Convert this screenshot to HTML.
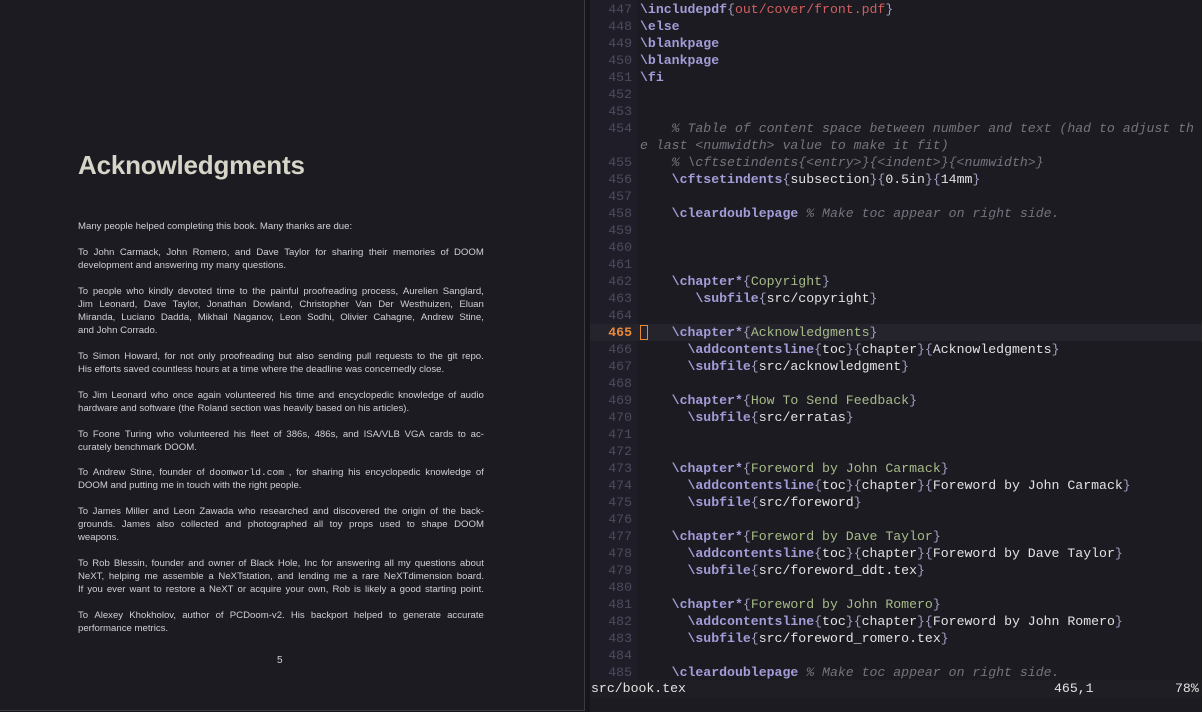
<!DOCTYPE html>
<html><head><meta charset="utf-8"><style>
*{margin:0;padding:0;box-sizing:border-box}
body{width:1202px;height:712px;background:#16151b;overflow:hidden;position:relative;font-family:"Liberation Sans",sans-serif}
#left{position:absolute;left:0;top:0;width:585px;height:711px;background:#1c1b22;border-right:1px solid #3a3a42;border-bottom:1px solid #3a3a42}
h1{position:absolute;left:78px;top:150px;font-size:26px;font-weight:bold;color:#d6d5c8;letter-spacing:-0.2px}
.p{position:absolute;left:78px;width:406px;font-size:9.6px;line-height:13px;color:#cfcfd4}
.p div{white-space:nowrap;display:flex;justify-content:space-between}
.p div.l{display:block}
#pn{position:absolute;left:277px;top:655px;font-size:10px;color:#cfcfd4}
#right{position:absolute;left:590px;top:0;width:612px;height:712px;background:#1c1b22}
#gut{position:absolute;left:0;top:0;width:48px;height:680px;background:#1f1e28}
#code{position:absolute;left:0;top:1px;width:612px;font-family:"Liberation Mono",monospace;font-size:13.2px;line-height:17px;color:#e2e2e2}
.r{height:17px;white-space:pre;position:relative}
.n{display:inline-block;width:42px;text-align:right;color:#4c4b5e}
.r .tx{position:absolute;left:50px;top:0}
.k{color:#a29cd8;font-weight:bold}
.b{color:#a09fc0}
.g{color:#a6bb88}
.c{color:#75747e;font-style:italic}
.rd{color:#d05f5f}
.cur{background:#25242d}
.cur .n{color:#e8893a;font-weight:bold}
#st{position:absolute;left:0;top:680px;width:612px;height:18px;background:#1f1e25;font-family:"Liberation Mono",monospace;font-size:13.2px;line-height:18px;color:#e2e2e2;white-space:pre}
</style></head><body>
<div id="left">
<h1>Acknowledgments</h1>
<div class="p" style="top:220px"><div class="l">Many people helped completing this book. Many thanks are due:</div></div>
<div class="p" style="top:246px"><div><span>To</span><span>John</span><span>Carmack,</span><span>John</span><span>Romero,</span><span>and</span><span>Dave</span><span>Taylor</span><span>for</span><span>sharing</span><span>their</span><span>memories</span><span>of</span><span>DOOM</span></div><div class="l">development and answering my many questions.</div></div>
<div class="p" style="top:285px"><div><span>To</span><span>people</span><span>who</span><span>kindly</span><span>devoted</span><span>time</span><span>to</span><span>the</span><span>painful</span><span>proofreading</span><span>process,</span><span>Aurelien</span><span>Sanglard,</span></div><div><span>Jim</span><span>Leonard,</span><span>Dave</span><span>Taylor,</span><span>Jonathan</span><span>Dowland,</span><span>Christopher</span><span>Van</span><span>Der</span><span>Westhuizen,</span><span>Eluan</span></div><div><span>Miranda,</span><span>Luciano</span><span>Dadda,</span><span>Mikhail</span><span>Naganov,</span><span>Leon</span><span>Sodhi,</span><span>Olivier</span><span>Cahagne,</span><span>Andrew</span><span>Stine,</span></div><div class="l">and John Corrado.</div></div>
<div class="p" style="top:350px"><div><span>To</span><span>Simon</span><span>Howard,</span><span>for</span><span>not</span><span>only</span><span>proofreading</span><span>but</span><span>also</span><span>sending</span><span>pull</span><span>requests</span><span>to</span><span>the</span><span>git</span><span>repo.</span></div><div class="l">His efforts saved countless hours at a time where the deadline was concernedly close.</div></div>
<div class="p" style="top:389px"><div><span>To</span><span>Jim</span><span>Leonard</span><span>who</span><span>once</span><span>again</span><span>volunteered</span><span>his</span><span>time</span><span>and</span><span>encyclopedic</span><span>knowledge</span><span>of</span><span>audio</span></div><div class="l">hardware and software (the Roland section was heavily based on his articles).</div></div>
<div class="p" style="top:428px"><div><span>To</span><span>Foone</span><span>Turing</span><span>who</span><span>volunteered</span><span>his</span><span>fleet</span><span>of</span><span>386s,</span><span>486s,</span><span>and</span><span>ISA/VLB</span><span>VGA</span><span>cards</span><span>to</span><span>ac-</span></div><div class="l">curately benchmark DOOM.</div></div>
<div class="p" style="top:466px"><div><span>To</span><span>Andrew</span><span>Stine,</span><span>founder</span><span>of</span><span style="font-family:'Liberation Mono',monospace">doomworld.com</span><span>,</span><span>for</span><span>sharing</span><span>his</span><span>encyclopedic</span><span>knowledge</span><span>of</span></div><div class="l">DOOM and putting me in touch with the right people.</div></div>
<div class="p" style="top:505px"><div><span>To</span><span>James</span><span>Miller</span><span>and</span><span>Leon</span><span>Zawada</span><span>who</span><span>researched</span><span>and</span><span>discovered</span><span>the</span><span>origin</span><span>of</span><span>the</span><span>back-</span></div><div><span>grounds.</span><span>James</span><span>also</span><span>collected</span><span>and</span><span>photographed</span><span>all</span><span>toy</span><span>props</span><span>used</span><span>to</span><span>shape</span><span>DOOM</span></div><div class="l">weapons.</div></div>
<div class="p" style="top:557px"><div><span>To</span><span>Rob</span><span>Blessin,</span><span>founder</span><span>and</span><span>owner</span><span>of</span><span>Black</span><span>Hole,</span><span>Inc</span><span>for</span><span>answering</span><span>all</span><span>my</span><span>questions</span><span>about</span></div><div><span>NeXT,</span><span>helping</span><span>me</span><span>assemble</span><span>a</span><span>NeXTstation,</span><span>and</span><span>lending</span><span>me</span><span>a</span><span>rare</span><span>NeXTdimension</span><span>board.</span></div><div><span>If</span><span>you</span><span>ever</span><span>want</span><span>to</span><span>restore</span><span>a</span><span>NeXT</span><span>or</span><span>acquire</span><span>your</span><span>own,</span><span>Rob</span><span>is</span><span>likely</span><span>a</span><span>good</span><span>starting</span><span>point.</span></div></div>
<div class="p" style="top:609px"><div><span>To</span><span>Alexey</span><span>Khokholov,</span><span>author</span><span>of</span><span>PCDoom-v2.</span><span>His</span><span>backport</span><span>helped</span><span>to</span><span>generate</span><span>accurate</span></div><div class="l">performance metrics.</div></div>
<div id="pn">5</div>
</div>
<div id="right">
<div id="gut"></div>
<div id="code">
<div class="r"><span class="n">447</span><span class="tx"><span class="k">\includepdf</span><span class="b">{</span><span class="rd">out/cover/front.pdf</span><span class="b">}</span></span></div>
<div class="r"><span class="n">448</span><span class="tx"><span class="k">\else</span></span></div>
<div class="r"><span class="n">449</span><span class="tx"><span class="k">\blankpage</span></span></div>
<div class="r"><span class="n">450</span><span class="tx"><span class="k">\blankpage</span></span></div>
<div class="r"><span class="n">451</span><span class="tx"><span class="k">\fi</span></span></div>
<div class="r"><span class="n">452</span></div>
<div class="r"><span class="n">453</span></div>
<div class="r"><span class="n">454</span><span class="tx"><span class="c">    % Table of content space between number and text (had to adjust th</span></span></div>
<div class="r"><span class="n"> </span><span class="tx"><span class="c">e last &lt;numwidth&gt; value to make it fit)</span></span></div>
<div class="r"><span class="n">455</span><span class="tx"><span class="c">    % \cftsetindents{&lt;entry&gt;}{&lt;indent&gt;}{&lt;numwidth&gt;}</span></span></div>
<div class="r"><span class="n">456</span><span class="tx">    <span class="k">\cftsetindents</span><span class="b">{</span>subsection<span class="b">}{</span>0.5in<span class="b">}{</span>14mm<span class="b">}</span></span></div>
<div class="r"><span class="n">457</span></div>
<div class="r"><span class="n">458</span><span class="tx">    <span class="k">\cleardoublepage</span> <span class="c">% Make toc appear on right side.</span></span></div>
<div class="r"><span class="n">459</span></div>
<div class="r"><span class="n">460</span></div>
<div class="r"><span class="n">461</span></div>
<div class="r"><span class="n">462</span><span class="tx">    <span class="k">\chapter*</span><span class="b">{</span><span class="g">Copyright</span><span class="b">}</span></span></div>
<div class="r"><span class="n">463</span><span class="tx">       <span class="k">\subfile</span><span class="b">{</span>src/copyright<span class="b">}</span></span></div>
<div class="r"><span class="n">464</span></div>
<div class="r cur"><span class="n">465</span><span style="position:absolute;left:50px;top:1px;width:8px;height:15px;border:1px solid #e8893a"></span><span class="tx">    <span class="k">\chapter*</span><span class="b">{</span><span class="g">Acknowledgments</span><span class="b">}</span></span></div>
<div class="r"><span class="n">466</span><span class="tx">      <span class="k">\addcontentsline</span><span class="b">{</span>toc<span class="b">}{</span>chapter<span class="b">}{</span>Acknowledgments<span class="b">}</span></span></div>
<div class="r"><span class="n">467</span><span class="tx">      <span class="k">\subfile</span><span class="b">{</span>src/acknowledgment<span class="b">}</span></span></div>
<div class="r"><span class="n">468</span></div>
<div class="r"><span class="n">469</span><span class="tx">    <span class="k">\chapter*</span><span class="b">{</span><span class="g">How To Send Feedback</span><span class="b">}</span></span></div>
<div class="r"><span class="n">470</span><span class="tx">      <span class="k">\subfile</span><span class="b">{</span>src/erratas<span class="b">}</span></span></div>
<div class="r"><span class="n">471</span></div>
<div class="r"><span class="n">472</span></div>
<div class="r"><span class="n">473</span><span class="tx">    <span class="k">\chapter*</span><span class="b">{</span><span class="g">Foreword by John Carmack</span><span class="b">}</span></span></div>
<div class="r"><span class="n">474</span><span class="tx">      <span class="k">\addcontentsline</span><span class="b">{</span>toc<span class="b">}{</span>chapter<span class="b">}{</span>Foreword by John Carmack<span class="b">}</span></span></div>
<div class="r"><span class="n">475</span><span class="tx">      <span class="k">\subfile</span><span class="b">{</span>src/foreword<span class="b">}</span></span></div>
<div class="r"><span class="n">476</span></div>
<div class="r"><span class="n">477</span><span class="tx">    <span class="k">\chapter*</span><span class="b">{</span><span class="g">Foreword by Dave Taylor</span><span class="b">}</span></span></div>
<div class="r"><span class="n">478</span><span class="tx">      <span class="k">\addcontentsline</span><span class="b">{</span>toc<span class="b">}{</span>chapter<span class="b">}{</span>Foreword by Dave Taylor<span class="b">}</span></span></div>
<div class="r"><span class="n">479</span><span class="tx">      <span class="k">\subfile</span><span class="b">{</span>src/foreword_ddt.tex<span class="b">}</span></span></div>
<div class="r"><span class="n">480</span></div>
<div class="r"><span class="n">481</span><span class="tx">    <span class="k">\chapter*</span><span class="b">{</span><span class="g">Foreword by John Romero</span><span class="b">}</span></span></div>
<div class="r"><span class="n">482</span><span class="tx">      <span class="k">\addcontentsline</span><span class="b">{</span>toc<span class="b">}{</span>chapter<span class="b">}{</span>Foreword by John Romero<span class="b">}</span></span></div>
<div class="r"><span class="n">483</span><span class="tx">      <span class="k">\subfile</span><span class="b">{</span>src/foreword_romero.tex<span class="b">}</span></span></div>
<div class="r"><span class="n">484</span></div>
<div class="r"><span class="n">485</span><span class="tx">    <span class="k">\cleardoublepage</span> <span class="c">% Make toc appear on right side.</span></span></div>
</div>
<div id="st"><span style="position:absolute;left:1px">src/book.tex</span><span style="position:absolute;left:464px">465,1</span><span style="position:absolute;left:585px">78%</span></div>
</div>
</body></html>
